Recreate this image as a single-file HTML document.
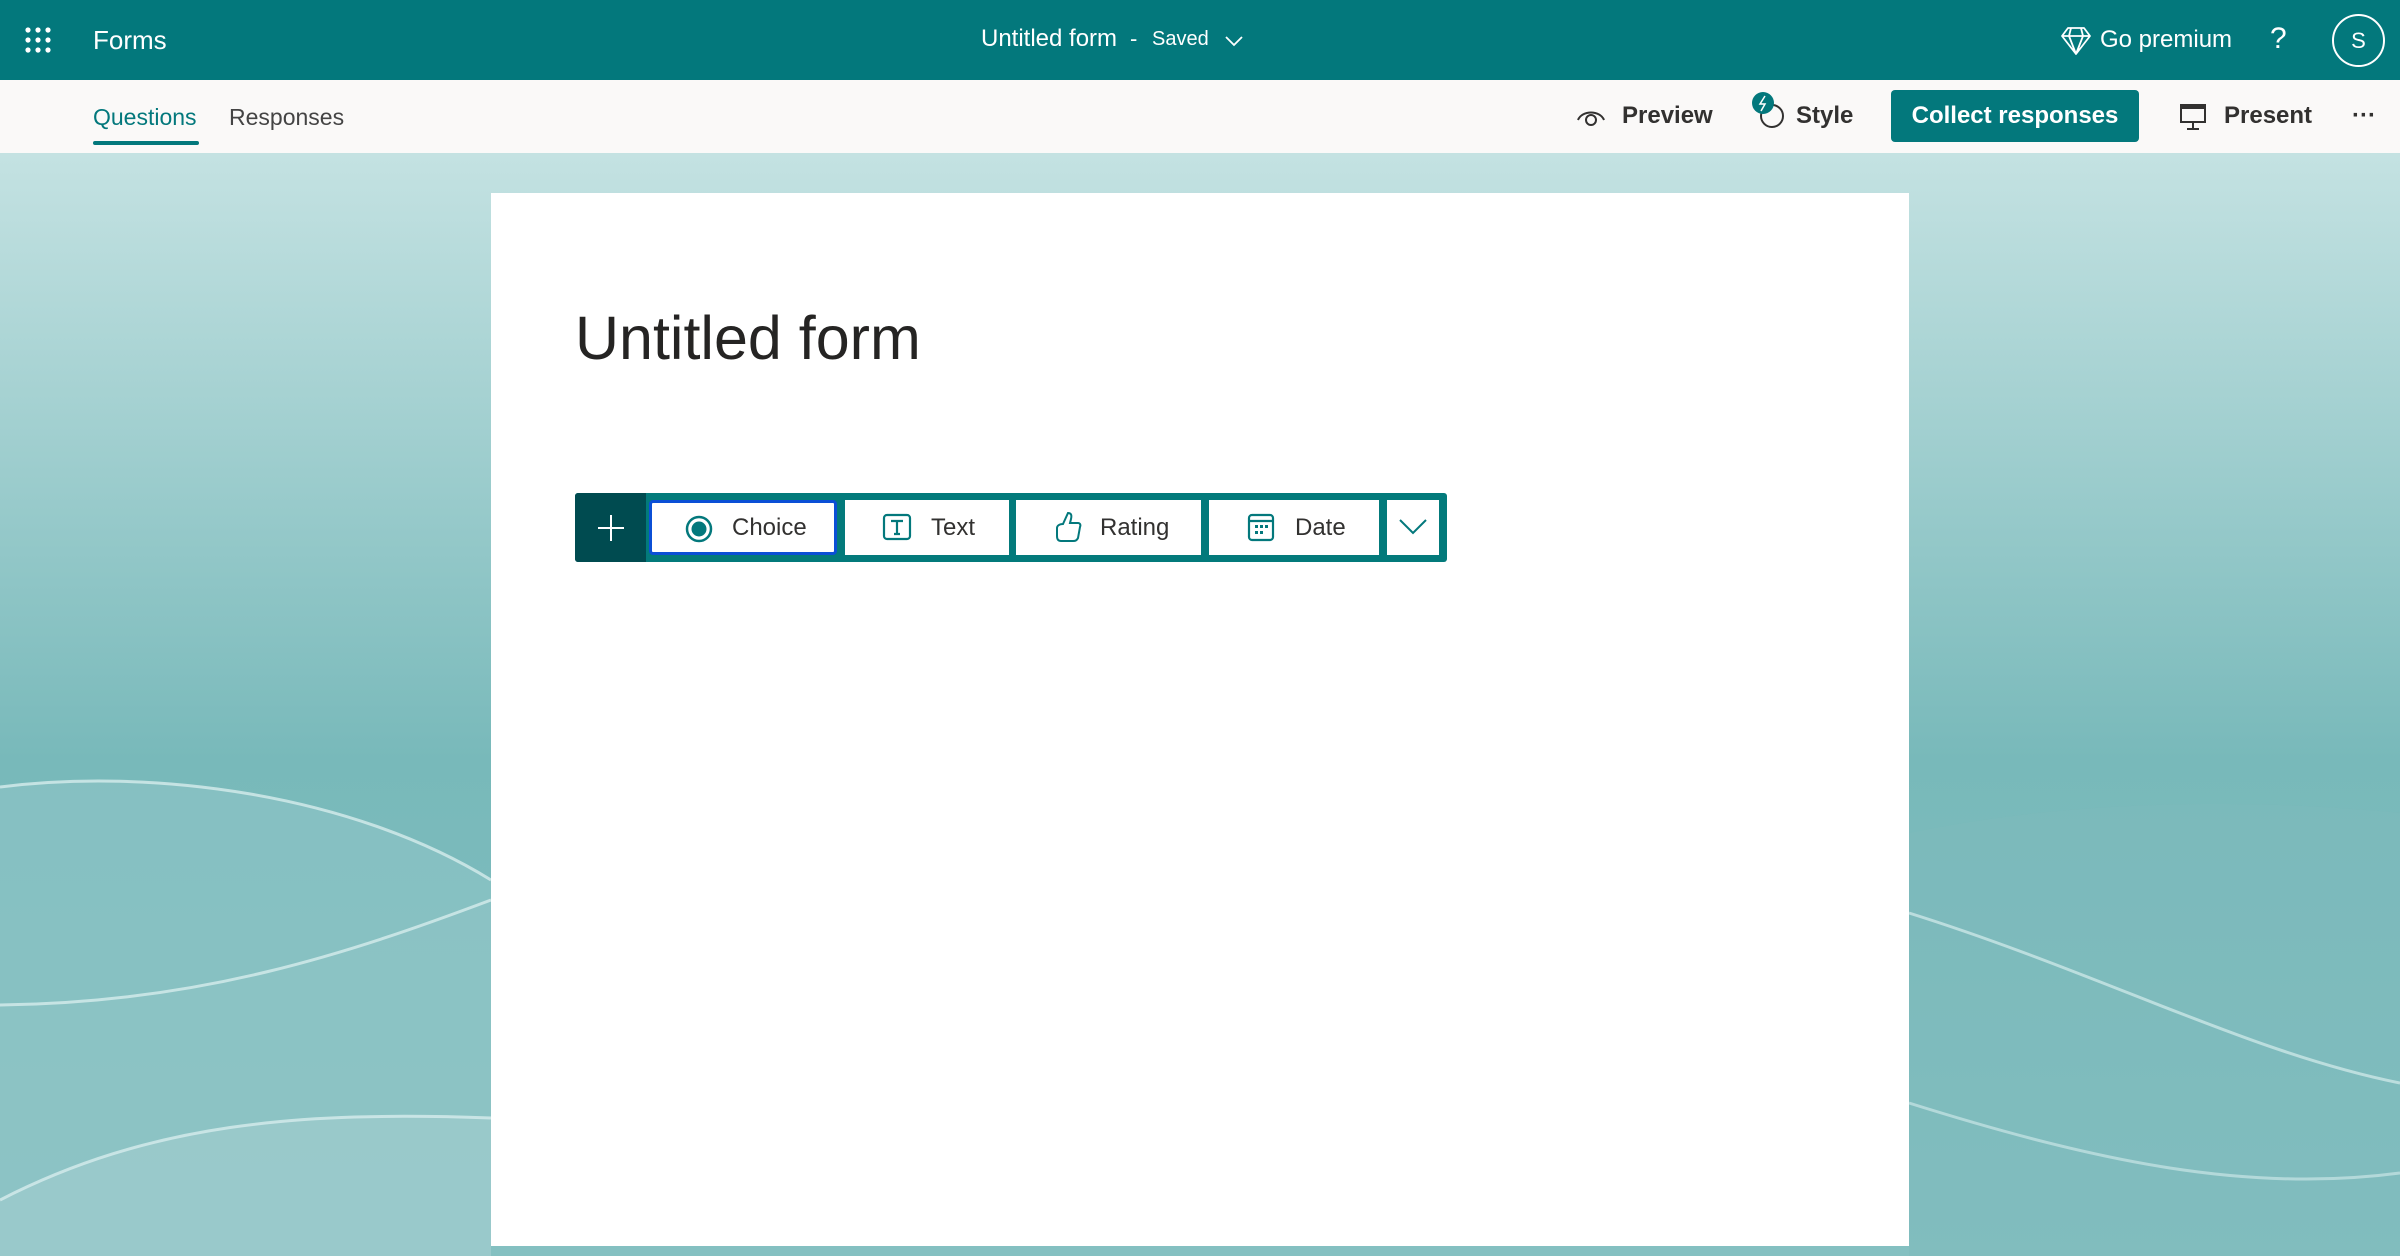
<!DOCTYPE html>
<html><head><meta charset="utf-8"><style>
*{margin:0;padding:0;box-sizing:border-box}
body{width:2400px;height:1256px;overflow:hidden;font-family:"Liberation Sans",sans-serif;position:relative;background:#a9d3d4}
.hdr{position:absolute;left:0;top:0;width:2400px;height:80px;background:#03787c;color:#fff}
.hdr span{position:absolute;white-space:nowrap}
.sub{position:absolute;left:0;top:80px;width:2400px;height:73px;background:#faf9f8;color:#323130}
.sub span{position:absolute;white-space:nowrap}
.bg{position:absolute;left:0;top:153px}
.card{position:absolute;left:491px;top:193px;width:1418px;height:1053px;background:#fff}
.tb{position:absolute;left:575px;top:493px;width:872px;height:69px;background:#037a7b;border-radius:3px}
.btn{position:absolute;top:7px;height:55px;background:#fff;font-size:24px;color:#323130}
.btn span{position:absolute;top:14px}
</style></head><body>
<svg class="bg" width="2400" height="1103" viewBox="0 0 2400 1103">
<defs><linearGradient id="g" x1="0" y1="0" x2="0" y2="1"><stop offset="0" stop-color="#c4e2e2"/><stop offset="0.55" stop-color="#78b9ba"/><stop offset="1" stop-color="#84c0c1"/></linearGradient></defs>
<rect width="2400" height="1103" fill="url(#g)"/>
<path d="M0 634 C150 615 350 640 491 727 L491 747 C350 800 200 850 0 852Z" fill="#8cc3c4" opacity="0.7"/>
<path d="M0 852 C200 850 350 800 491 747 L491 1103 L0 1103Z" fill="#8ec4c5" opacity="0.8"/>
<path d="M0 1047 C150 970 300 958 491 965 L491 1103 L0 1103Z" fill="#9ccbcc" opacity="0.8"/>
<path d="M0 634 C150 615 350 640 491 727" stroke="#d6ecec" stroke-width="3" fill="none" opacity="0.8"/>
<path d="M0 852 C200 850 350 800 491 747" stroke="#d6ecec" stroke-width="3" fill="none" opacity="0.8"/>
<path d="M0 1047 C150 970 300 958 491 965" stroke="#d6ecec" stroke-width="3" fill="none" opacity="0.8"/>
<path d="M1909 680 C2100 640 2300 650 2400 660 L2400 1103 L1909 1103Z" fill="#7dbabb" opacity="0.5"/>
<path d="M1909 760 C2100 820 2250 900 2400 930" stroke="#d6ecec" stroke-width="3" fill="none" opacity="0.7"/>
<path d="M1909 950 C2100 1010 2250 1040 2400 1020" stroke="#d6ecec" stroke-width="3" fill="none" opacity="0.6"/>
</svg>
<div class="hdr">
<svg style="position:absolute;left:25px;top:27px" width="28" height="28"><g fill="#fff"><circle cx="3" cy="3" r="2.6"/><circle cx="13" cy="3" r="2.6"/><circle cx="23" cy="3" r="2.6"/><circle cx="3" cy="13" r="2.6"/><circle cx="13" cy="13" r="2.6"/><circle cx="23" cy="13" r="2.6"/><circle cx="3" cy="23" r="2.6"/><circle cx="13" cy="23" r="2.6"/><circle cx="23" cy="23" r="2.6"/></g></svg>
<span style="left:93px;top:25px;font-size:26px">Forms</span>
<span style="left:981px;top:25px;font-size:24px">Untitled form</span>
<span style="left:1130px;top:26px;font-size:22px">-</span>
<span style="left:1152px;top:28px;font-size:20px">Saved</span>
<svg style="position:absolute;left:1225px;top:35px" width="18" height="12"><path d="M1 2 L9 10 L17 2" stroke="#fff" stroke-width="1.8" fill="none"/></svg>
<svg style="position:absolute;left:2060px;top:25px" width="32" height="32"><path d="M8 3 H24 L30 11 L16 29 L2 11Z M2 11 H30 M11 3 L9 11 L16 29 L23 11 L21 3" stroke="#fff" stroke-width="1.8" fill="none" stroke-linejoin="round"/></svg>
<span style="left:2100px;top:26px;font-size:24px">Go premium</span>
<span style="left:2270px;top:22px;font-size:30px">?</span>
<div style="position:absolute;left:2332px;top:14px;width:53px;height:53px;border:2px solid #fff;border-radius:50%;text-align:center;line-height:49px;font-size:22px">S</div>
</div>
<div class="sub">
<span style="left:93px;top:24px;font-size:23px;color:#03787c">Questions</span>
<div style="position:absolute;left:93px;top:61px;width:106px;height:4px;background:#03787c;border-radius:2px"></div>
<span style="left:229px;top:24px;font-size:23px;color:#444">Responses</span>
<svg style="position:absolute;left:1576px;top:26px" width="30" height="22"><path d="M2 14 C6 4 24 4 28 14" stroke="#323130" stroke-width="2" fill="none"/><circle cx="15" cy="14" r="5" stroke="#323130" stroke-width="2" fill="none"/></svg>
<span style="left:1622px;top:22px;font-size:24px;font-weight:bold">Preview</span>
<svg style="position:absolute;left:1748px;top:10px" width="40" height="42"><circle cx="16" cy="16" r="11" stroke="#323130" stroke-width="2" fill="none" transform="translate(8 10)"/><circle cx="15" cy="13" r="11" fill="#03787c"/><path d="M17 6 L12 14 H17 L13 21" stroke="#fff" stroke-width="1.5" fill="none"/></svg>
<span style="left:1796px;top:22px;font-size:24px;font-weight:bold">Style</span>
<div style="position:absolute;left:1891px;top:10px;width:248px;height:52px;background:#03787c;border-radius:4px;color:#fff;font-size:24px;font-weight:bold;text-align:center;line-height:52px">Collect responses</div>
<svg style="position:absolute;left:2178px;top:22px" width="30" height="30"><rect x="3" y="3" width="24" height="17" stroke="#323130" stroke-width="2" fill="none"/><rect x="3" y="3" width="24" height="4" fill="#323130"/><path d="M15 20 V27 M9 27 H21" stroke="#323130" stroke-width="2"/></svg>
<span style="left:2224px;top:22px;font-size:24px;font-weight:bold">Present</span>
<span style="left:2352px;top:22px;font-size:24px;font-weight:bold">···</span>
</div>
<div class="card">
<div style="position:absolute;left:84px;top:110px;font-size:61px;color:#252423">Untitled form</div>
</div>
<div class="tb">
<div style="position:absolute;left:0;top:0;width:71px;height:69px;background:#004b50;border-radius:3px 0 0 3px"></div>
<svg style="position:absolute;left:22px;top:21px" width="28" height="28"><path d="M14 1V27M1 14H27" stroke="#fff" stroke-width="2"/></svg>
<div class="btn" style="left:74px;width:188px;border:3px solid #0b4fd6;border-radius:4px"><svg style="position:absolute;left:32px;top:11px" width="30" height="30"><circle cx="15" cy="15" r="12" stroke="#03787c" stroke-width="2.5" fill="none"/><circle cx="15" cy="15" r="7.5" fill="#03787c"/></svg><span style="left:80px;top:11px">Choice</span></div>
<div class="btn" style="left:270px;width:164px"><svg style="position:absolute;left:37px;top:13px" width="30" height="30"><rect x="2" y="2" width="26" height="24" rx="3" stroke="#03787c" stroke-width="2.2" fill="none"/><path d="M9 8H21M15 8V21M12 21H18" stroke="#03787c" stroke-width="2.2" fill="none"/></svg><span style="left:86px">Text</span></div>
<div class="btn" style="left:441px;width:185px"><svg style="position:absolute;left:37px;top:10px" width="30" height="34"><path d="M10 14 L15 3 C18 3 19 5 18 9 L17 13 H25 C27 13 28 15 27 17 L25 28 C24 30 23 31 20 31 H8 C5 31 4 29 4 26 V18 C4 16 6 14 10 14Z" stroke="#03787c" stroke-width="2" fill="none"/></svg><span style="left:84px">Rating</span></div>
<div class="btn" style="left:634px;width:170px"><svg style="position:absolute;left:38px;top:13px" width="28" height="30"><rect x="2" y="2" width="24" height="25" rx="3" stroke="#03787c" stroke-width="2.2" fill="none"/><path d="M2 8H26" stroke="#03787c" stroke-width="2.2"/><g fill="#03787c"><rect x="8" y="12" width="3" height="3"/><rect x="13" y="12" width="3" height="3"/><rect x="18" y="12" width="3" height="3"/><rect x="8" y="18" width="3" height="3"/><rect x="13" y="18" width="3" height="3"/></g></svg><span style="left:86px">Date</span></div>
<div class="btn" style="left:812px;width:52px"><svg style="position:absolute;left:12px;top:19px" width="28" height="16"><path d="M1 1 L14 14 L27 1" stroke="#03787c" stroke-width="2" fill="none"/></svg></div>
</div>
</body></html>
